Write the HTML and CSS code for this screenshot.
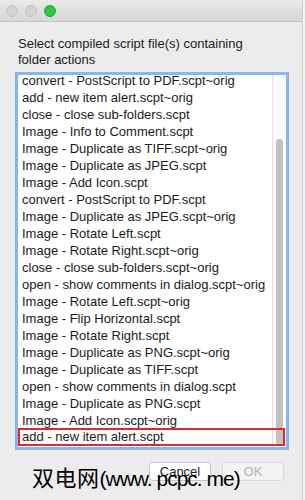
FILE: index.html
```html
<!doctype html>
<html>
	<head>
		<title>Folder Actions</title>
		<meta charset="utf8">
		<link rel="stylesheet" href="styles.css">
	</head>
	<body>
		<div class="window">
			<div class="titlebar">
				<span class="light"></span>
				<span class="light"></span>
				<span class="light green"></span>
			</div>
			<p class="prompt">Select compiled script file(s) containing folder actions</p>
			<div class="listbox">
				<ul class="items">
					<li>convert - PostScript to PDF.scpt~orig</li>
					<li>add - new item alert.scpt~orig</li>
					<li>close - close sub-folders.scpt</li>
					<li>Image - Info to Comment.scpt</li>
					<li>Image - Duplicate as TIFF.scpt~orig</li>
					<li>Image - Duplicate as JPEG.scpt</li>
					<li>Image - Add Icon.scpt</li>
					<li>convert - PostScript to PDF.scpt</li>
					<li>Image - Duplicate as JPEG.scpt~orig</li>
					<li>Image - Rotate Left.scpt</li>
					<li>Image - Rotate Right.scpt~orig</li>
					<li>close - close sub-folders.scpt~orig</li>
					<li>open - show comments in dialog.scpt~orig</li>
					<li>Image - Rotate Left.scpt~orig</li>
					<li>Image - Flip Horizontal.scpt</li>
					<li>Image - Rotate Right.scpt</li>
					<li>Image - Duplicate as PNG.scpt~orig</li>
					<li>Image - Duplicate as TIFF.scpt</li>
					<li>open - show comments in dialog.scpt</li>
					<li>Image - Duplicate as PNG.scpt</li>
					<li>Image - Add Icon.scpt~orig</li>
					<li class="marked">add - new item alert.scpt</li>
				</ul>
				<div class="scrollbar">
					<div class="thumb"></div>
				</div>
			</div>
			<div class="buttons">
				<span class="button">Cancel</span>
				<span class="button disabled">OK</span>
			</div>
			<div class="watermark">双电网<span class="site">(www. pcpc. me)</span></div>
		</div>
	</body>
</html>
```

FILE: styles.css
```css
* {
	margin: 0;
	padding: 0;
	box-sizing: border-box;
}
html,body {
	background-color: #f4f4f4;
	font-family: "Liberation Sans", Arial, sans-serif;
	font-size: 13px;
	color: #1a1a1a;
	overflow: hidden;
}
.window {
	position: relative;
	width: 303px;
	height: 500px;
	background-color: #ececec;
	border-right: 1px solid #cfcfcf;
}
.titlebar {
	height: 22px;
	display: flex;
	align-items: center;
	gap: 7px;
	padding-left: 6px;
	background: linear-gradient(#ebebeb, #d6d6d6);
	border-bottom: 1px solid #c4c4c4;
}
.light {
	width: 12px;
	height: 12px;
	border-radius: 50%;
	background-color: #d3d3d3;
	border: 1px solid #c2c2c2;
}
.green {
	background-color: #2ac840;
	border-color: #1fae32;
}
.prompt {
	margin: 14px 30px 0 18px;
	line-height: 16px;
}
.listbox {
	display: flex;
	margin: 4px 0 0 15px;
	width: 274px;
	height: 378px;
	border: 3px solid #86b7f0;
	background-color: #fff;
	overflow: hidden;
}
.items {
	flex-grow: 1;
	list-style: none;
	margin-top: -3px;
}
.items li {
	height: 17px;
	line-height: 17px;
	padding-left: 4px;
	white-space: nowrap;
}
.items .marked {
	position: relative;
	z-index: 1;
	border: 2px solid #e8262a;
	line-height: 14px;
	padding-left: 2px;
	margin-top: -1px;
	margin-right: -13px;
	height: 18px;
}
.scrollbar {
	width: 14px;
	flex-shrink: 0;
	border-left: 1px solid #e3e3e3;
	background-color: #fafafa;
	padding: 64px 3px 2px 3px;
}
.thumb {
	height: 100%;
	border-radius: 4px;
	background-color: #c2c2c2;
}
.buttons {
	display: flex;
	justify-content: flex-end;
	gap: 11px;
	padding: 12px 18px 0 0;
}
.button {
	width: 62px;
	height: 19px;
	line-height: 17px;
	text-align: center;
	background-color: #fff;
	border: 1px solid #c6c6c6;
	border-radius: 4px;
	font-size: 13px;
}
.disabled {
	background-color: #f3f3f3;
	border-color: #d9d9d9;
	color: #b4b4b4;
}
.watermark {
	position: absolute;
	left: 32px;
	top: 463px;
	font-family: "Noto Sans CJK SC", sans-serif;
	font-size: 22px;
	line-height: 26px;
	color: #000;
	letter-spacing: 0.5px;
}
.site {
	font-family: "Liberation Sans", sans-serif;
	font-size: 21px;
	letter-spacing: -1px;
}
```
